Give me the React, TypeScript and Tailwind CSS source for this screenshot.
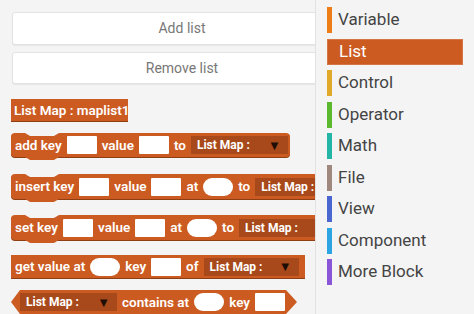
import React from "react";

const BLOCK = "bg-[#cc5b22]";

function Input() {
  return <div className="w-[30px] h-[18px] bg-white rounded-[1px] shrink-0" />;
}
function Oval() {
  return <div className="w-[30px] h-[18px] bg-white rounded-full shrink-0" />;
}
function T({ children }: { children: React.ReactNode }) {
  return <span className="whitespace-nowrap shrink-0">{children}</span>;
}
function Drop({ w }: { w: number }) {
  return (
    <div
      className="h-[18px] bg-[#a8491b] flex items-center justify-between pl-[6px] pr-[7px] shrink-0 text-[12px] font-bold whitespace-nowrap"
      style={{ width: w }}
    >
      <span>List Map :</span>
      <span className="text-[#1e0d04] text-[13px] leading-none">▼</span>
    </div>
  );
}

function Notches() {
  return (
    <>
      <div className="absolute top-0 left-[14px] w-[34px] h-[3px] bg-[#f4f4f4] [clip-path:polygon(0_0,100%_0,85%_100%,15%_100%)]" />
      <div className="absolute top-full left-[14px] w-[34px] h-[3px] bg-[#cc5b22] [clip-path:polygon(0_0,100%_0,85%_100%,15%_100%)]" />
    </>
  );
}

function Stack({
  children,
  h,
  mt,
  w,
}: {
  children: React.ReactNode;
  h: number;
  mt: number;
  w?: number;
}) {
  return (
    <div
      className={`relative ${BLOCK} rounded-[4px] flex items-center gap-[5px] pl-[4px] pr-[4px] text-white text-[13.5px] font-semibold shadow-[0_1px_0_#8f3d12] shrink-0`}
      style={{ height: h, marginTop: mt, width: w }}
    >
      <Notches />
      {children}
    </div>
  );
}

const cats = [
  { name: "Variable", color: "#ee7d16" },
  { name: "List", color: "#cc5b22", sel: true },
  { name: "Control", color: "#e1a92a" },
  { name: "Operator", color: "#5cb82d" },
  { name: "Math", color: "#23b5a6" },
  { name: "File", color: "#a1887f" },
  { name: "View", color: "#4a67d0" },
  { name: "Component", color: "#2ca5e2" },
  { name: "More Block", color: "#8a55d7" },
];

export default function App() {
  return (
    <div
      className="w-[474px] h-[314px] flex bg-[#f4f4f4] overflow-hidden"
      style={{ fontFamily: "Roboto, 'Noto Sans', sans-serif" }}
    >
      <div className="w-[315px] h-full overflow-hidden shrink-0">
        <div className="w-[400px] flex flex-col items-start pl-[11px] pt-[12px]">
          <div className="ml-[1px] w-[340px] h-[33px] bg-white border border-[#e3e3e3] rounded-[3px] shadow-[0_1px_1px_rgba(0,0,0,0.06)] flex items-center justify-center text-[14px] text-[#777]">
            Add list
          </div>
          <div className="ml-[1px] mt-[7px] w-[340px] h-[32px] bg-white border border-[#e3e3e3] rounded-[3px] shadow-[0_1px_1px_rgba(0,0,0,0.06)] flex items-center justify-center text-[14px] text-[#777]">
            Remove list
          </div>

          <div
            className={`mt-[15px] ${BLOCK} h-[22px] w-[117px] flex items-center pl-[3px] text-white text-[13.5px] font-semibold whitespace-nowrap shadow-[0_1px_0_#8f3d12]`}
          >
            List Map : maplist1
          </div>

          <Stack h={24} mt={12} w={279}>
            <T>add key</T>
            <Input />
            <T>value</T>
            <Input />
            <T>to</T>
            <Drop w={97} />
          </Stack>

          <Stack h={25} mt={17} w={330}>
            <T>insert key</T>
            <Input />
            <T>value</T>
            <Input />
            <T>at</T>
            <Oval />
            <T>to</T>
            <Drop w={97} />
          </Stack>

          <Stack h={25} mt={16} w={330}>
            <T>set key</T>
            <Input />
            <T>value</T>
            <Input />
            <T>at</T>
            <Oval />
            <T>to</T>
            <Drop w={97} />
          </Stack>

          <div
            className={`mt-[15px] ${BLOCK} h-[23px] w-[294px] flex items-center gap-[5px] pl-[4px] text-white text-[13.5px] font-semibold shadow-[0_1px_0_#8f3d12]`}
          >
            <T>get value at</T>
            <Oval />
            <T>key</T>
            <Input />
            <T>of</T>
            <Drop w={95} />
          </div>

          <div
            className={`mt-[12px] ${BLOCK} h-[24px] w-[286px] flex items-center gap-[5px] pl-[9px] text-white text-[13.5px] font-semibold [clip-path:polygon(9px_0,calc(100%_-_11px)_0,100%_50%,calc(100%_-_11px)_100%,9px_100%,0_50%)]`}
          >
            <Drop w={97} />
            <T>contains at</T>
            <Oval />
            <T>key</T>
            <Input />
          </div>
        </div>
      </div>

      <div className="flex-1 h-full border-l border-[#e2e2e2] bg-[#f4f4f4] flex flex-col gap-[5.5px] pt-[7px] pl-[11px]">
        {cats.map((c) =>
          c.sel ? (
            <div
              key={c.name}
              className="h-[26px] w-[136px] bg-[#cc5b22] flex items-center pl-[11px] text-white text-[17px] border border-[#e8a07a]/40"
            >
              {c.name}
            </div>
          ) : (
            <div key={c.name} className="h-[26px] flex items-center">
              <div className="w-[5px] h-full" style={{ backgroundColor: c.color }} />
              <span className="ml-[6px] text-[17px] text-[#444]">{c.name}</span>
            </div>
          )
        )}
      </div>
    </div>
  );
}
